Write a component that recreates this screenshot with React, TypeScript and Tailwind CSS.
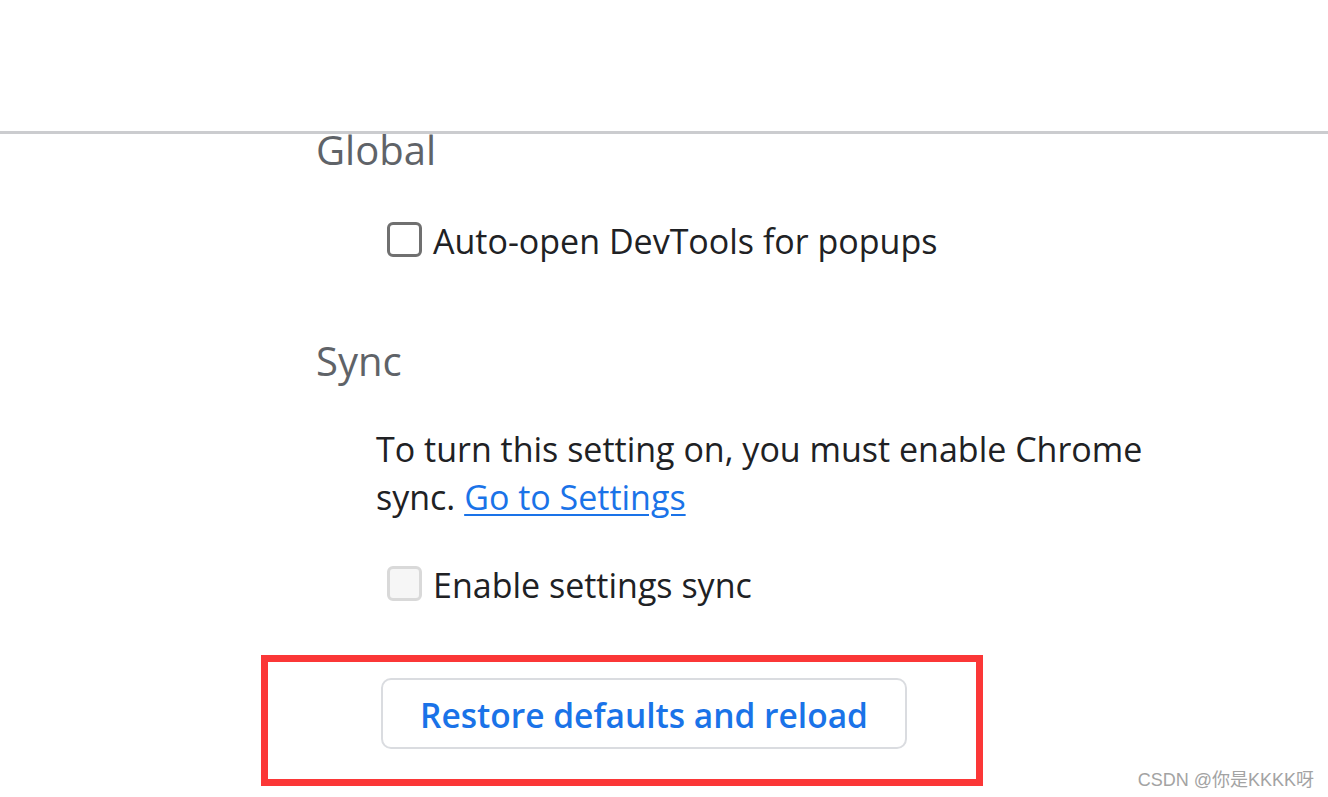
import React from "react";

function Checkbox({ disabled }: { disabled?: boolean }) {
  return (
    <span
      className={
        disabled
          ? "mt-[5px] block h-[35px] w-[35px] shrink-0 rounded-[6px] border-[3px] border-[#d9d9d9] bg-[#f6f6f6]"
          : "mt-[5px] block h-[35px] w-[35px] shrink-0 rounded-[6px] border-[3px] border-[#707070] bg-white"
      }
    />
  );
}

export default function App() {
  return (
    <div
      className="relative flex h-[797px] w-[1328px] flex-col overflow-hidden bg-white"
      style={{ fontFamily: '"Open Sans", "Noto Sans", sans-serif' }}
    >
      <header className="h-[134px] shrink-0 border-b-[3px] border-[#cbcccf] bg-white" />
      <main className="flex-1">
        <div className="flex flex-col pl-[316px]">
          <h2 className="mt-px text-[40px] leading-[30px] font-normal text-[#5f6368]">Global</h2>

          <label className="ml-[71px] mt-[52px] flex items-start gap-[11px] text-[34px] leading-[48px] text-[#202124]">
            <Checkbox />
            <span>Auto-open DevTools for popups</span>
          </label>

          <h2 className="mt-[72px] text-[40px] leading-[48px] font-normal text-[#5f6368]">Sync</h2>

          <p className="ml-[60px] mt-[40px] w-[790px] text-[34px] leading-[48px] text-[#202124]">
            To turn this setting on, you must enable Chrome sync.{" "}
            <a className="text-[#1a73e8] underline underline-offset-[4px] decoration-[2px]">Go to Settings</a>
          </p>

          <label className="ml-[71px] mt-[40px] flex items-start gap-[11px] text-[34px] leading-[48px] text-[#202124]">
            <Checkbox disabled />
            <span>Enable settings sync</span>
          </label>

          <div className="-ml-[55px] mt-[46px] h-[131px] w-[722px] border-[7px] border-[#fb3737] pl-[113px] pt-[16px]">
            <button className="flex h-[71px] w-[526px] items-center justify-center rounded-[10px] border-2 border-[#dadce0] bg-white pt-[3px] text-[33.5px] font-semibold text-[#1a73e8]">
              Restore defaults and reload
            </button>
          </div>
        </div>
      </main>
      <div
        className="absolute bottom-[5px] right-[14px] text-[18px] leading-[24px] text-[#a3a3a3]"
        style={{ fontFamily: '"Liberation Sans", "Noto Sans CJK SC", sans-serif' }}
      >
        CSDN @你是KKKK呀
      </div>
    </div>
  );
}
